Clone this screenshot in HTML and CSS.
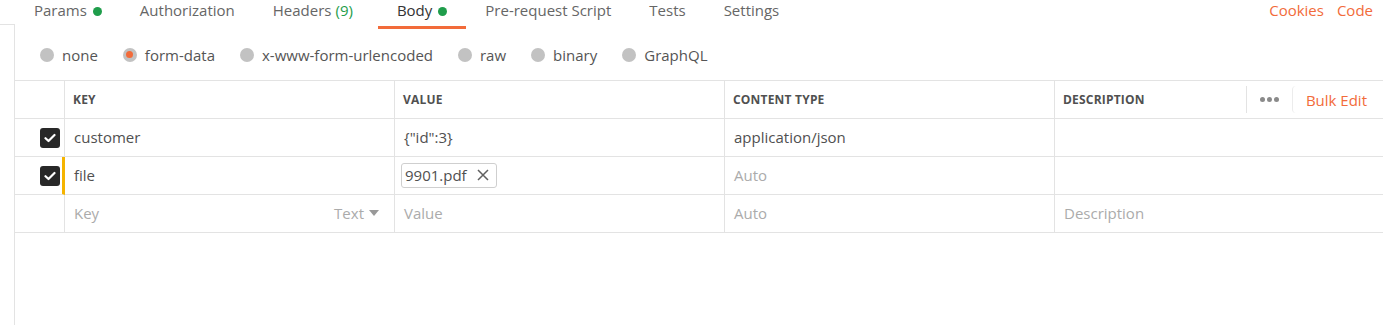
FILE: index.html
```html
<!DOCTYPE html>
<html lang="en">

<head>
    <meta charset="UTF-8" />
    <meta name="viewport" content="width=device-width, initial-scale=1.0" />
    <title>Body · form-data</title>
    <link rel="stylesheet" href="styles.css">
</head>

<body>
    <div class="page">
        <div class="side">
            <div class="side-top"></div>
            <div class="side-rest"></div>
        </div>

        <div class="main">
            <div class="tabs">
                <div class="tab">Params <span class="dot"></span></div>
                <div class="tab">Authorization</div>
                <div class="tab">Headers <span class="count">(9)</span></div>
                <div class="tab active">Body <span class="dot"></span></div>
                <div class="tab">Pre-request Script</div>
                <div class="tab">Tests</div>
                <div class="tab">Settings</div>
                <div class="tab-links">
                    <a class="link">Cookies</a>
                    <a class="link">Code</a>
                </div>
            </div>

            <div class="modes">
                <label class="mode"><span class="radio"></span>none</label>
                <label class="mode"><span class="radio checked"></span>form-data</label>
                <label class="mode"><span class="radio"></span>x-www-form-urlencoded</label>
                <label class="mode"><span class="radio"></span>raw</label>
                <label class="mode"><span class="radio"></span>binary</label>
                <label class="mode"><span class="radio"></span>GraphQL</label>
            </div>

            <div class="kv-table">
                <!-- header -->
                <div class="cell check"></div>
                <div class="cell head">Key</div>
                <div class="cell head">Value</div>
                <div class="cell head">Content Type</div>
                <div class="cell head last">
                    <span class="head-label">Description</span>
                    <div class="head-tools">
                        <span class="more"><i></i><i></i><i></i></span>
                        <a class="bulk">Bulk Edit</a>
                    </div>
                </div>

                <!-- row 1 -->
                <div class="cell check"><span class="box">
                    <svg width="12" height="10" viewBox="0 0 12 10"><path d="M1.5 5.2 4.5 8 10.5 2" fill="none" stroke="#fff" stroke-width="2.2" stroke-linecap="round" stroke-linejoin="round"/></svg>
                </span></div>
                <div class="cell">customer</div>
                <div class="cell">{"id":3}</div>
                <div class="cell">application/json</div>
                <div class="cell last"></div>

                <!-- row 2 -->
                <div class="cell check editing"><span class="box">
                    <svg width="12" height="10" viewBox="0 0 12 10"><path d="M1.5 5.2 4.5 8 10.5 2" fill="none" stroke="#fff" stroke-width="2.2" stroke-linecap="round" stroke-linejoin="round"/></svg>
                </span></div>
                <div class="cell">file</div>
                <div class="cell file-cell">
                    <span class="chip">9901.pdf
                        <svg width="12" height="12" viewBox="0 0 12 12"><path d="M1 1 11 11M11 1 1 11" stroke="#606060" stroke-width="1.5"/></svg>
                    </span>
                </div>
                <div class="cell muted">Auto</div>
                <div class="cell last"></div>

                <!-- new row -->
                <div class="cell check"></div>
                <div class="cell muted key-cell">
                    <span>Key</span>
                    <span class="type">Text <span class="caret"></span></span>
                </div>
                <div class="cell muted">Value</div>
                <div class="cell muted">Auto</div>
                <div class="cell muted last">Description</div>
            </div>
        </div>
    </div>
</body>

</html>
```

FILE: styles.css
```css
body,
html {
    margin: 0;
    padding: 0;
    height: 100%;
    font-family: "Open Sans", Arial, sans-serif;
    font-size: 15px;
    color: #505050;
    background-color: #fff;
}

.page {
    display: flex;
    height: 325px;
}

.side {
    width: 15px;
    display: flex;
    flex-direction: column;
}

.side-top {
    height: 24px;
    border-bottom: 1px solid #e3e3e3;
}

.side-rest {
    flex-grow: 1;
    border-right: 1px solid #e3e3e3;
}

.main {
    flex-grow: 1;
    min-width: 0;
}

/* tabs */
.tabs {
    display: flex;
    height: 29px;
}

.tab {
    box-sizing: border-box;
    height: 29px;
    padding: 0 19px;
    line-height: 21px;
    color: #666;
    border-bottom: 3px solid transparent;
    display: flex;
    align-items: flex-start;
    white-space: nowrap;
}

.tab.active {
    color: #333;
    border-bottom-color: #f26b3a;
}

.dot {
    display: inline-block;
    width: 9px;
    height: 9px;
    margin: 7px 0 0 6px;
    border-radius: 50%;
    background-color: #1f9d4b;
}

.count {
    color: #1f9d4b;
    margin: 0 6px 0 4px;
}

.tab-links {
    margin-left: auto;
    display: flex;
    gap: 13px;
    padding-right: 10px;
    line-height: 21px;
}

.link {
    color: #f26b3a;
    text-decoration: none;
}

/* body modes */
.modes {
    display: flex;
    align-items: center;
    height: 51px;
    padding-left: 25px;
    box-sizing: border-box;
    gap: 25px;
}

.mode {
    display: flex;
    align-items: center;
    gap: 8px;
    color: #555;
}

.radio {
    width: 14px;
    height: 14px;
    border-radius: 50%;
    background-color: #c2c2c2;
    display: flex;
    align-items: center;
    justify-content: center;
}

.radio.checked::after {
    content: "";
    width: 7px;
    height: 7px;
    border-radius: 50%;
    background-color: #f26b3a;
}

/* key-value table */
.kv-table {
    display: grid;
    grid-template-columns: 50px 330px 330px 330px 1fr;
    border-top: 1px solid #e3e3e3;
}

.cell {
    box-sizing: border-box;
    height: 38px;
    padding: 0 8px 1px 9px;
    display: flex;
    align-items: center;
    border-right: 1px solid #e3e3e3;
    border-bottom: 1px solid #e3e3e3;
    white-space: nowrap;
}

.cell.last {
    border-right: none;
}

.cell.head {
    font-size: 12px;
    font-weight: bold;
    text-transform: uppercase;
    letter-spacing: 0.2px;
    color: #505050;
    padding-left: 8px;
}

.cell.check {
    justify-content: flex-end;
    padding: 0 4px 0 0;
}

.cell.check.editing {
    border-right: 3px solid #f5b400;
    padding-right: 2px;
}

.box {
    width: 20px;
    height: 20px;
    border-radius: 3px;
    background-color: #282828;
    display: flex;
    align-items: center;
    justify-content: center;
}

.muted {
    color: #ababab;
}

.file-cell {
    padding-left: 6px;
}

.chip {
    display: flex;
    align-items: center;
    gap: 10px;
    height: 25px;
    box-sizing: border-box;
    padding: 0 7px 0 3px;
    border: 1px solid #cfcfcf;
    border-radius: 3px;
    color: #505050;
}

.key-cell {
    justify-content: space-between;
    padding-right: 15px;
}

.type {
    display: flex;
    align-items: center;
    gap: 5px;
}

.caret {
    width: 0;
    height: 0;
    border-left: 5px solid transparent;
    border-right: 5px solid transparent;
    border-top: 6px solid #999;
}

.head-label {
    flex-grow: 1;
}

.head-tools {
    display: flex;
    align-items: center;
    height: 100%;
    padding: 5px 0 4px;
    box-sizing: border-box;
    margin-right: -8px;
}

.more {
    display: flex;
    gap: 2px;
    align-items: center;
    height: 100%;
    padding: 0 13px;
    border-left: 1px solid #e3e3e3;
}

.more i {
    width: 5px;
    height: 5px;
    border-radius: 50%;
    background-color: #8a8a8a;
}

.bulk {
    display: flex;
    align-items: center;
    height: 100%;
    padding: 0 16px 0 13px;
    border-left: 1px solid #ececec;
    border-radius: 4px;
    font-size: 15px;
    font-weight: normal;
    text-transform: none;
    letter-spacing: 0;
    color: #f26b3a;
}
```
